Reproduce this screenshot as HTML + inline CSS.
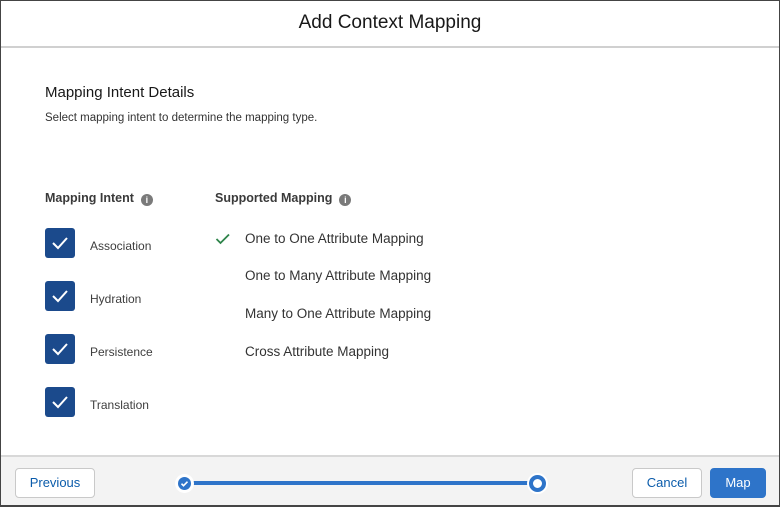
<!DOCTYPE html>
<html><head><style>
*{box-sizing:border-box;margin:0;padding:0}
body{width:780px;height:507px;background:#fff;font-family:"Liberation Sans",Arial,sans-serif;color:#181818;position:relative;overflow:hidden}
.frame{position:absolute;left:0;top:0;width:780px;height:507px;border:1px solid #444;border-bottom-width:2px}
.hdr{position:absolute;left:1px;top:1px;width:778px;height:47px;border-bottom:2px solid #d0d0d0;text-align:center;font-size:19px;line-height:44px;color:#181818}
.t{position:absolute;white-space:nowrap}
.cb{position:absolute;left:45px;width:30px;height:30px;background:#1b4a8c;border-radius:3px}
.cb svg{position:absolute;left:6px;top:7px}
.lbl{font-size:12px;color:#3e3e3e}
.sm{font-size:13.5px;color:#333}
.info{display:inline-block;width:12px;height:12px;border-radius:50%;background:#7a7a7a;color:#fff;font-size:9px;line-height:12px;text-align:center;font-weight:bold;vertical-align:-1px;margin-left:7px}
.ftr{position:absolute;left:1px;top:455px;width:778px;height:50px;background:#f3f3f3;border-top:2px solid #d8d8d8}
.btn{position:absolute;top:468px;height:30px;border:1px solid #c9c9c9;border-radius:4px;background:#fff;color:#0b5cab;font-size:13px;text-align:center;line-height:28px}
</style></head><body>
<div class="hdr">Add Context Mapping</div>
<div class="t" style="left:45px;top:84px;font-size:15px">Mapping Intent Details</div>
<div class="t" style="left:45px;top:112px;font-size:11.5px;color:#333">Select mapping intent to determine the mapping type.</div>
<div class="t" style="left:45px;top:191px;font-size:12.5px;font-weight:bold;color:#3a3a3a">Mapping Intent<span class="info">i</span></div>
<div class="t" style="left:215px;top:191px;font-size:12.5px;font-weight:bold;color:#3a3a3a">Supported Mapping<span class="info">i</span></div>
<div class="cb" style="top:228px"><svg width="18" height="16" viewBox="0 0 18 16"><path d="M2 8l5 5L16 3" stroke="#fff" stroke-width="2" fill="none"/></svg></div>
<div class="cb" style="top:281px"><svg width="18" height="16" viewBox="0 0 18 16"><path d="M2 8l5 5L16 3" stroke="#fff" stroke-width="2" fill="none"/></svg></div>
<div class="cb" style="top:334px"><svg width="18" height="16" viewBox="0 0 18 16"><path d="M2 8l5 5L16 3" stroke="#fff" stroke-width="2" fill="none"/></svg></div>
<div class="cb" style="top:387px"><svg width="18" height="16" viewBox="0 0 18 16"><path d="M2 8l5 5L16 3" stroke="#fff" stroke-width="2" fill="none"/></svg></div>
<div class="t lbl" style="left:90px;top:239px">Association</div>
<div class="t lbl" style="left:90px;top:292px">Hydration</div>
<div class="t lbl" style="left:90px;top:345px">Persistence</div>
<div class="t lbl" style="left:90px;top:398px">Translation</div>
<svg style="position:absolute;left:215px;top:232px" width="16" height="14" viewBox="0 0 16 14"><path d="M1.5 7l4 4L14 2.5" stroke="#2e844a" stroke-width="1.8" fill="none"/></svg>
<div class="t sm" style="left:245px;top:231px">One to One Attribute Mapping</div>
<div class="t sm" style="left:245px;top:268px">One to Many Attribute Mapping</div>
<div class="t sm" style="left:245px;top:306px">Many to One Attribute Mapping</div>
<div class="t sm" style="left:245px;top:344px">Cross Attribute Mapping</div>
<div class="ftr"></div>
<div class="btn" style="left:15px;width:80px">Previous</div>
<div class="btn" style="left:632px;width:70px">Cancel</div>
<div class="btn" style="left:710px;width:56px;background:#2e74c9;border-color:#2e74c9;color:#fff">Map</div>
<div style="position:absolute;left:190px;top:481px;width:340px;height:4px;background:#2e74c9"></div>
<div style="position:absolute;left:175px;top:474px;width:19px;height:19px;border-radius:50%;background:#fff"></div>
<svg style="position:absolute;left:178px;top:477px" width="13" height="13" viewBox="0 0 13 13"><circle cx="6.5" cy="6.5" r="6.5" fill="#2e74c9"/><path d="M3.5 6.7l2 2 4-4" stroke="#fff" stroke-width="1.6" fill="none"/></svg>
<div style="position:absolute;left:527px;top:473px;width:21px;height:21px;border-radius:50%;background:#fff"></div>
<div style="position:absolute;left:529px;top:475px;width:17px;height:17px;border-radius:50%;border:4px solid #2e74c9;background:#fff"></div>
<div class="frame"></div>
</body></html>
